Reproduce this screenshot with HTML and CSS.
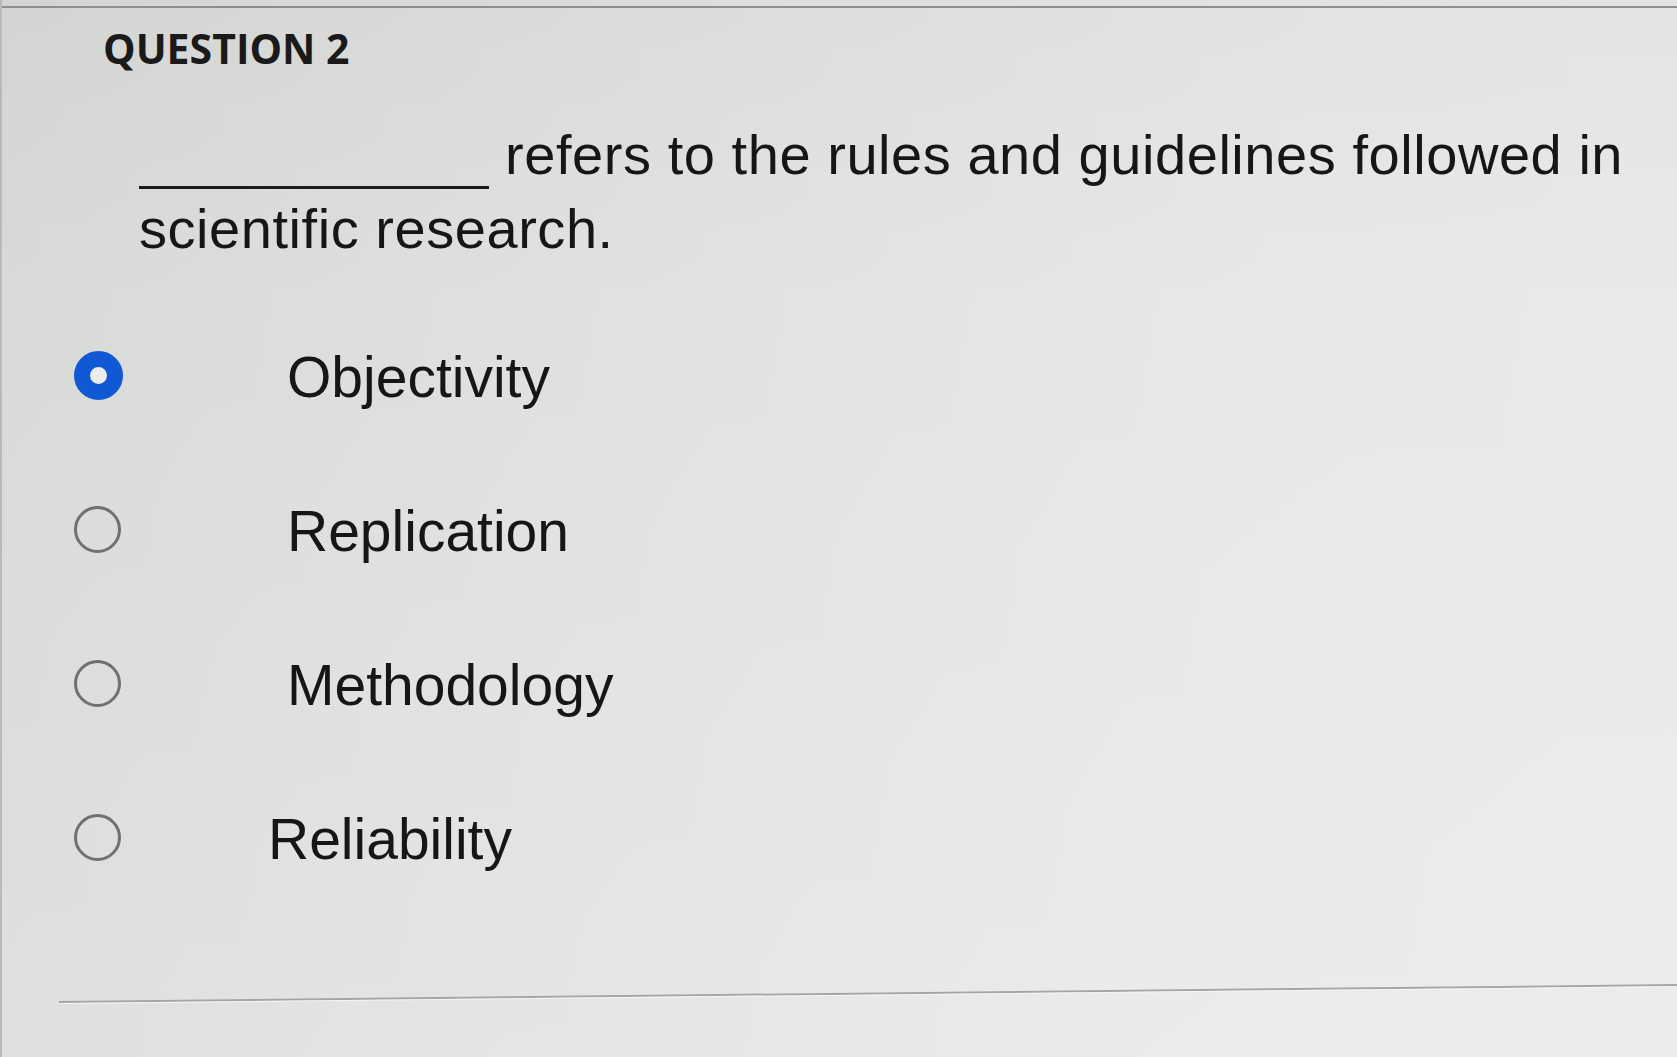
FILE: index.html
```html
<!DOCTYPE html>
<html lang="en">
<head>
<meta charset="utf-8">
<title>Question 2</title>
<link rel="stylesheet" href="styles.css">
</head>
<body>
<div class="page">
  <div class="question">
    <h2 class="q-title">QUESTION 2</h2>
    <p class="q-text"><span class="blank"></span> refers to the rules and guidelines followed in<br>scientific research.</p>
    <ul class="options">
      <li class="option">
        <span class="radio radio-checked"></span>
        <span class="label">Objectivity</span>
      </li>
      <li class="option">
        <span class="radio"></span>
        <span class="label">Replication</span>
      </li>
      <li class="option">
        <span class="radio"></span>
        <span class="label">Methodology</span>
      </li>
      <li class="option option-last">
        <span class="radio"></span>
        <span class="label">Reliability</span>
      </li>
    </ul>
    <div class="divider"></div>
  </div>
</div>
</body>
</html>
```
FILE: styles.css
```css
html, body {
  margin: 0;
  padding: 0;
}

body {
  width: 1677px;
  height: 1057px;
  overflow: hidden;
  background: linear-gradient(100deg, #d8dad8 0%, #e1e2e0 35%, #e8e9e7 70%, #eaebe9 100%);
  color: #161616;
}

.page {
  height: 1057px;
  padding-top: 6px;
  box-sizing: border-box;
  border-left: 2px solid #b9bbba;
  background: linear-gradient(180deg, rgba(0,0,0,0.025) 0%, rgba(255,255,255,0) 30%, rgba(255,255,255,0.12) 100%);
}

.question {
  border-top: 2px solid #8d8f8f;
  padding-top: 11px;
}

.q-title {
  margin: 0 0 0 101px;
  font-family: "Open Sans", "Noto Sans", sans-serif;
  font-weight: 700;
  font-size: 41px;
  line-height: 58px;
  letter-spacing: 0;
  color: #1a1a1a;
}

.q-text {
  margin: 41px 0 0 137px;
  font-family: "Liberation Sans", Arial, sans-serif;
  font-size: 56px;
  line-height: 74px;
  letter-spacing: 0.55px;
  color: #161616;
}

.blank {
  display: inline-block;
  width: 350px;
  height: 0;
  border-bottom: 3px solid #1c1c1c;
  vertical-align: -15px;
}

.options {
  list-style: none;
  margin: 32px 0 0 0;
  padding: 0;
}

.option {
  display: flex;
  align-items: center;
  height: 154px;
  padding-left: 72px;
}

.radio {
  box-sizing: border-box;
  width: 47px;
  height: 47px;
  border-radius: 50%;
  border: 3px solid #6f7070;
  flex: none;
}

.radio-checked {
  width: 49px;
  height: 49px;
  margin-right: -2px;
  border: 16px solid #1159d4;
  background: #eceeed;
}

.label {
  margin-left: 166px;
  padding-top: 3px;
  font-family: "Liberation Sans", Arial, sans-serif;
  font-size: 57px;
  line-height: 62px;
  color: #161616;
}

.option-last .label {
  margin-left: 147px;
}

.divider {
  margin: 87px 0 0 57px;
  height: 0;
  border-top: 2px solid #a3a5a6;
  border-bottom: 1px solid #f4f5f3;
  transform: rotate(-0.6deg);
  transform-origin: left center;
}
```
